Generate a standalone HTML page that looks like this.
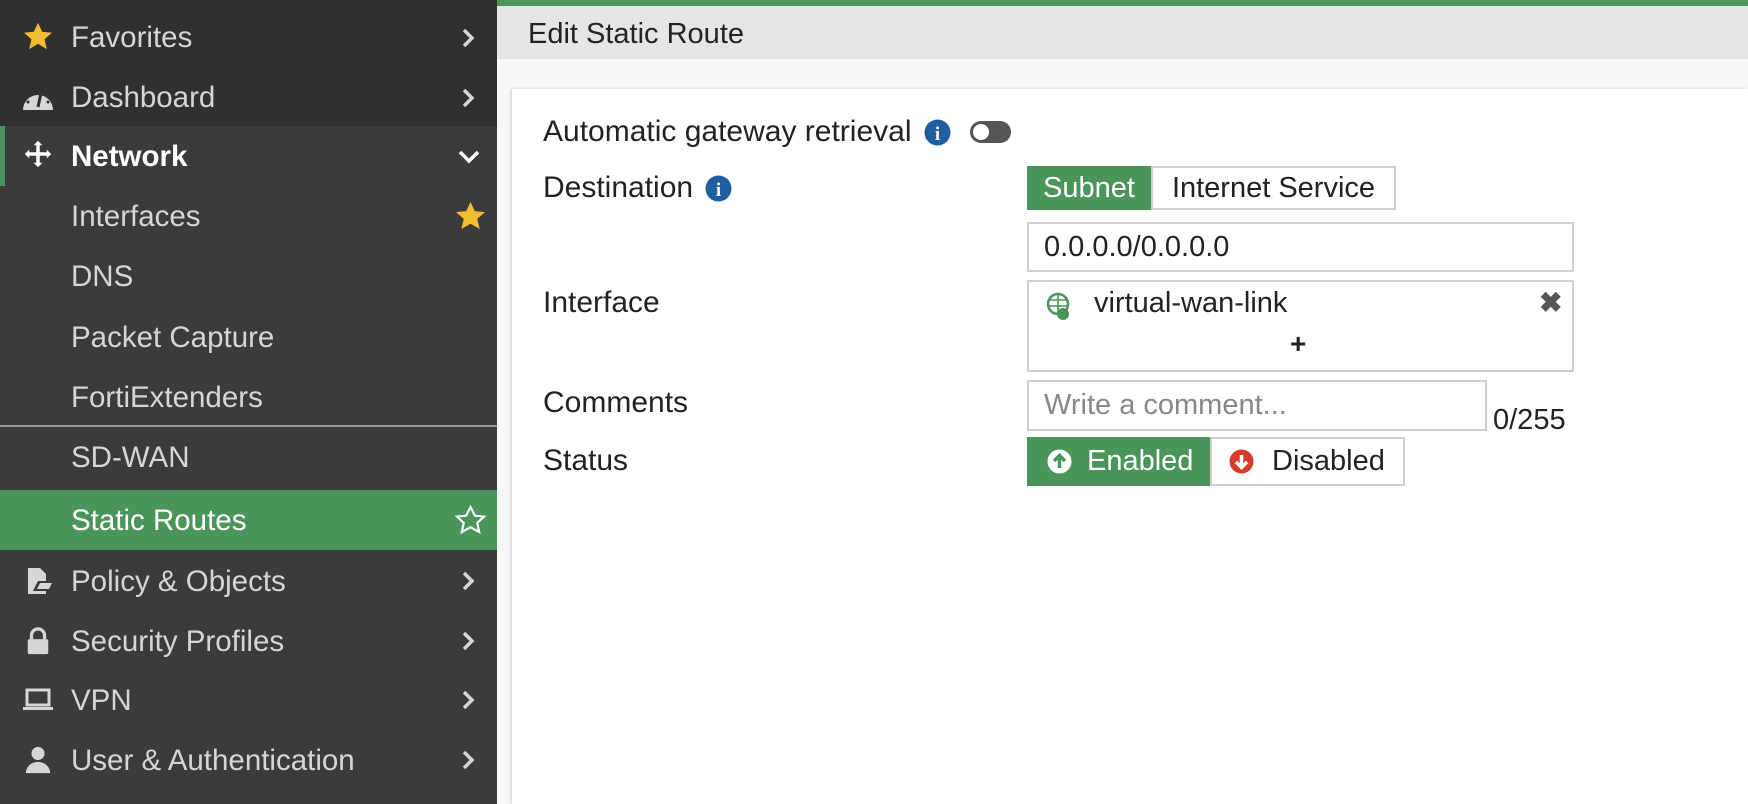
<!DOCTYPE html>
<html><head><style>
*{margin:0;padding:0;box-sizing:border-box}
body{width:1748px;height:804px;overflow:hidden;font-family:"Liberation Sans",sans-serif;background:#f8f8f8;position:relative}
#sb{position:absolute;left:0;top:0;width:497px;height:804px;background:#3b3b3b}
.r{position:absolute;left:0;width:497px;height:60px;color:#d6d6d6;font-size:29.5px;line-height:62px}
.r .t{position:absolute;left:71px}
.r .ic{position:absolute;left:22px;top:16px;width:32px;height:28px}
.r .ch{position:absolute;left:460px;top:20px}
#main{position:absolute;left:497px;top:0;right:0;height:804px}
.lbl{position:absolute;left:46px;font-size:30px;color:#222;display:flex;align-items:center;white-space:nowrap}
.box{position:absolute;border:2px solid #cfcfcf;background:#fff}
.info{margin-left:12px}
</style></head><body>
<div id="sb">
<div class="r" style="background:#303030;height:60px;top:0;line-height:76px">
<svg class="ic" style="top:22px" viewBox="0 0 32 30"><polygon points="16,1 20.5,10.5 31,11.5 23,18.5 25.5,29 16,23.5 6.5,29 9,18.5 1,11.5 11.5,10.5" fill="#f4bc2f"/></svg>
<span class="t">Favorites</span><svg class="ch" style="top:28px" width="16" height="20"><path d="M4 2l8 8-8 8" stroke="#d6d6d6" stroke-width="3.5" fill="none"/></svg></div>
<div class="r" style="top:60px;background:#303030;height:66px;line-height:76px">
<svg class="ic" style="top:24px" viewBox="0 0 32 26"><path d="M1 25A15 15 0 0 1 31 25Z" fill="#d6d6d6"/><path d="M16 22l3-14" stroke="#303030" stroke-width="3"/><circle cx="6" cy="17" r="1.5" fill="#303030"/><circle cx="10" cy="9" r="1.5" fill="#303030"/><circle cx="26" cy="17" r="1.5" fill="#303030"/></svg>
<span class="t">Dashboard</span><svg class="ch" style="top:28px" width="16" height="20"><path d="M4 2l8 8-8 8" stroke="#d6d6d6" stroke-width="3.5" fill="none"/></svg></div>
<div style="position:absolute;left:0;top:126px;width:5px;height:60px;background:#4a9559"></div>
<div class="r" style="top:126px;color:#fff;font-weight:bold">
<svg class="ic" style="top:14px" viewBox="0 0 32 32"><path d="M16 1l5 5h-3v8h8v-3l5 5-5 5v-3h-8v8h3l-5 5-5-5h3v-8H6v3l-5-5 5-5v3h8V6h-3z" fill="#fff"/></svg>
<span class="t">Network</span><svg class="ch" style="left:458px;top:24px" width="22" height="14"><path d="M2 2l9 9 9-9" stroke="#fff" stroke-width="3.5" fill="none"/></svg></div>
<div class="r" style="top:186px"><span class="t">Interfaces</span>
<svg style="position:absolute;left:455px;top:15px" width="31" height="29" viewBox="0 0 32 30"><polygon points="16,1 20.5,10.5 31,11.5 23,18.5 25.5,29 16,23.5 6.5,29 9,18.5 1,11.5 11.5,10.5" fill="#f4bc2f"/></svg></div>
<div class="r" style="top:246px"><span class="t">DNS</span></div>
<div class="r" style="top:307px"><span class="t">Packet Capture</span></div>
<div class="r" style="top:367px"><span class="t">FortiExtenders</span></div>
<div style="position:absolute;left:0;top:425px;width:497px;height:2px;background:#9a9a9a"></div>
<div class="r" style="top:427px"><span class="t">SD-WAN</span></div>
<div class="r" style="top:490px;background:#4a9559;color:#fff;height:60px"><span class="t">Static Routes</span>
<svg style="position:absolute;left:455px;top:15px" width="31" height="29" viewBox="0 0 32 30"><polygon points="16,2 20.5,11 30,12 23,18.5 25,28 16,23 7,28 9,18.5 2,12 11.5,11" fill="none" stroke="#fff" stroke-width="2.2"/></svg></div>
<div class="r" style="top:551px"><svg class="ic" viewBox="0 0 32 28"><path d="M6 1h12l6 6v20H6z" fill="#d6d6d6"/><path d="M16 14h14l-5 10H11z" fill="#3b3b3b"/><path d="M18 16h12l-3 6H15z" fill="#d6d6d6"/></svg><span class="t">Policy &amp; Objects</span><svg class="ch" width="16" height="20"><path d="M4 2l8 8-8 8" stroke="#d6d6d6" stroke-width="3.5" fill="none"/></svg></div>
<div class="r" style="top:611px"><svg class="ic" viewBox="0 0 32 30"><path d="M9 13V9a7 7 0 0 1 14 0v4" stroke="#d6d6d6" stroke-width="3.5" fill="none"/><rect x="5" y="13" width="22" height="16" rx="2" fill="#d6d6d6"/></svg><span class="t">Security Profiles</span><svg class="ch" width="16" height="20"><path d="M4 2l8 8-8 8" stroke="#d6d6d6" stroke-width="3.5" fill="none"/></svg></div>
<div class="r" style="top:670px"><svg class="ic" viewBox="0 0 32 28"><rect x="5" y="4" width="22" height="15" fill="none" stroke="#d6d6d6" stroke-width="3"/><path d="M1 21h30v3H1z" fill="#d6d6d6"/></svg><span class="t">VPN</span><svg class="ch" width="16" height="20"><path d="M4 2l8 8-8 8" stroke="#d6d6d6" stroke-width="3.5" fill="none"/></svg></div>
<div class="r" style="top:730px"><svg class="ic" viewBox="0 0 32 30"><circle cx="16" cy="8" r="7" fill="#d6d6d6"/><path d="M3 29a13 12 0 0 1 26 0z" fill="#d6d6d6"/></svg><span class="t">User &amp; Authentication</span><svg class="ch" width="16" height="20"><path d="M4 2l8 8-8 8" stroke="#d6d6d6" stroke-width="3.5" fill="none"/></svg></div>
</div>
<div id="main">
<div style="position:absolute;left:0;top:0;right:0;height:6px;background:#4a9559"></div>
<div style="position:absolute;left:0;top:6px;right:0;height:53px;background:#e5e5e5;font-size:29px;color:#222;line-height:56px;padding-left:31px">Edit Static Route</div>
<div style="position:absolute;left:15px;top:89px;right:0;bottom:0;background:#fff;box-shadow:-1px 0 3px #ccc"></div>
<div class="lbl" style="top:112px;height:40px">Automatic gateway retrieval
<svg class="info" width="27" height="27"><circle cx="13.5" cy="13.5" r="13" fill="#1f5fa0"/><text x="13.5" y="21" text-anchor="middle" fill="#fff" font-size="19" font-weight="bold" font-family="Liberation Serif">i</text></svg>
<span style="position:relative;display:inline-block;margin-left:19px;width:41px;height:22px;border-radius:11px;background:#555"><span style="position:absolute;left:3px;top:3px;width:16px;height:16px;border-radius:8px;background:#fff"></span></span></div>
<div class="lbl" style="top:168px;height:40px">Destination
<svg class="info" width="27" height="27"><circle cx="13.5" cy="13.5" r="13" fill="#1f5fa0"/><text x="13.5" y="21" text-anchor="middle" fill="#fff" font-size="19" font-weight="bold" font-family="Liberation Serif">i</text></svg></div>
<div style="position:absolute;left:530px;top:166px;width:124px;height:44px;background:#4a9559;color:#fff;font-size:29px;text-align:center;line-height:44px">Subnet</div>
<div class="box" style="left:654px;top:166px;width:245px;height:44px;font-size:29px;text-align:center;line-height:40px;color:#222">Internet Service</div>
<div class="box" style="left:530px;top:222px;width:547px;height:50px;font-size:29px;line-height:46px;padding-left:15px;color:#222">0.0.0.0/0.0.0.0</div>
<div class="lbl" style="top:286px">Interface</div>
<div class="box" style="left:530px;top:280px;width:547px;height:92px">
<svg style="position:absolute;left:17px;top:10px" width="26" height="30" viewBox="0 0 26 30"><circle cx="12" cy="12" r="10" fill="none" stroke="#4a9559" stroke-width="2.5"/><path d="M4 8h16M3 14h18M12 2v20" stroke="#4a9559" stroke-width="1.6"/><circle cx="17" cy="22" r="6" fill="#4a9559"/></svg>
<div style="position:absolute;left:65px;top:5px;font-size:29px;color:#222">virtual-wan-link</div>
<div style="position:absolute;left:510px;top:4px;font-size:28px;font-weight:bold;color:#555">✖</div>
<div style="position:absolute;left:261px;top:46px;font-size:28px;font-weight:bold;color:#222">+</div></div>
<div class="lbl" style="top:386px">Comments</div>
<div class="box" style="left:530px;top:380px;width:460px;height:51px;font-size:29px;line-height:46px;padding-left:15px;color:#888">Write a comment...</div>
<div style="position:absolute;left:996px;top:404px;font-size:29px;color:#222">0/255</div>
<div class="lbl" style="top:444px">Status</div>
<div style="position:absolute;left:530px;top:437px;width:183px;height:49px;background:#4a9559;color:#fff;font-size:29px;line-height:49px">
<svg style="position:absolute;left:20px;top:12px" width="25" height="25"><circle cx="12.5" cy="12.5" r="12" fill="#fff"/><path d="M12.5 19V7M7 12l5.5-5.5L18 12" stroke="#4a9559" stroke-width="3.5" fill="none"/></svg>
<span style="position:absolute;left:60px">Enabled</span></div>
<div class="box" style="left:713px;top:437px;width:195px;height:49px;font-size:29px;line-height:45px;color:#222">
<svg style="position:absolute;left:17px;top:10px" width="25" height="25"><circle cx="12.5" cy="12.5" r="12" fill="#d83a2b"/><path d="M12.5 6v12M7 13l5.5 5.5L18 13" stroke="#fff" stroke-width="3.5" fill="none"/></svg>
<span style="position:absolute;left:60px">Disabled</span></div>
</div>
</body></html>
